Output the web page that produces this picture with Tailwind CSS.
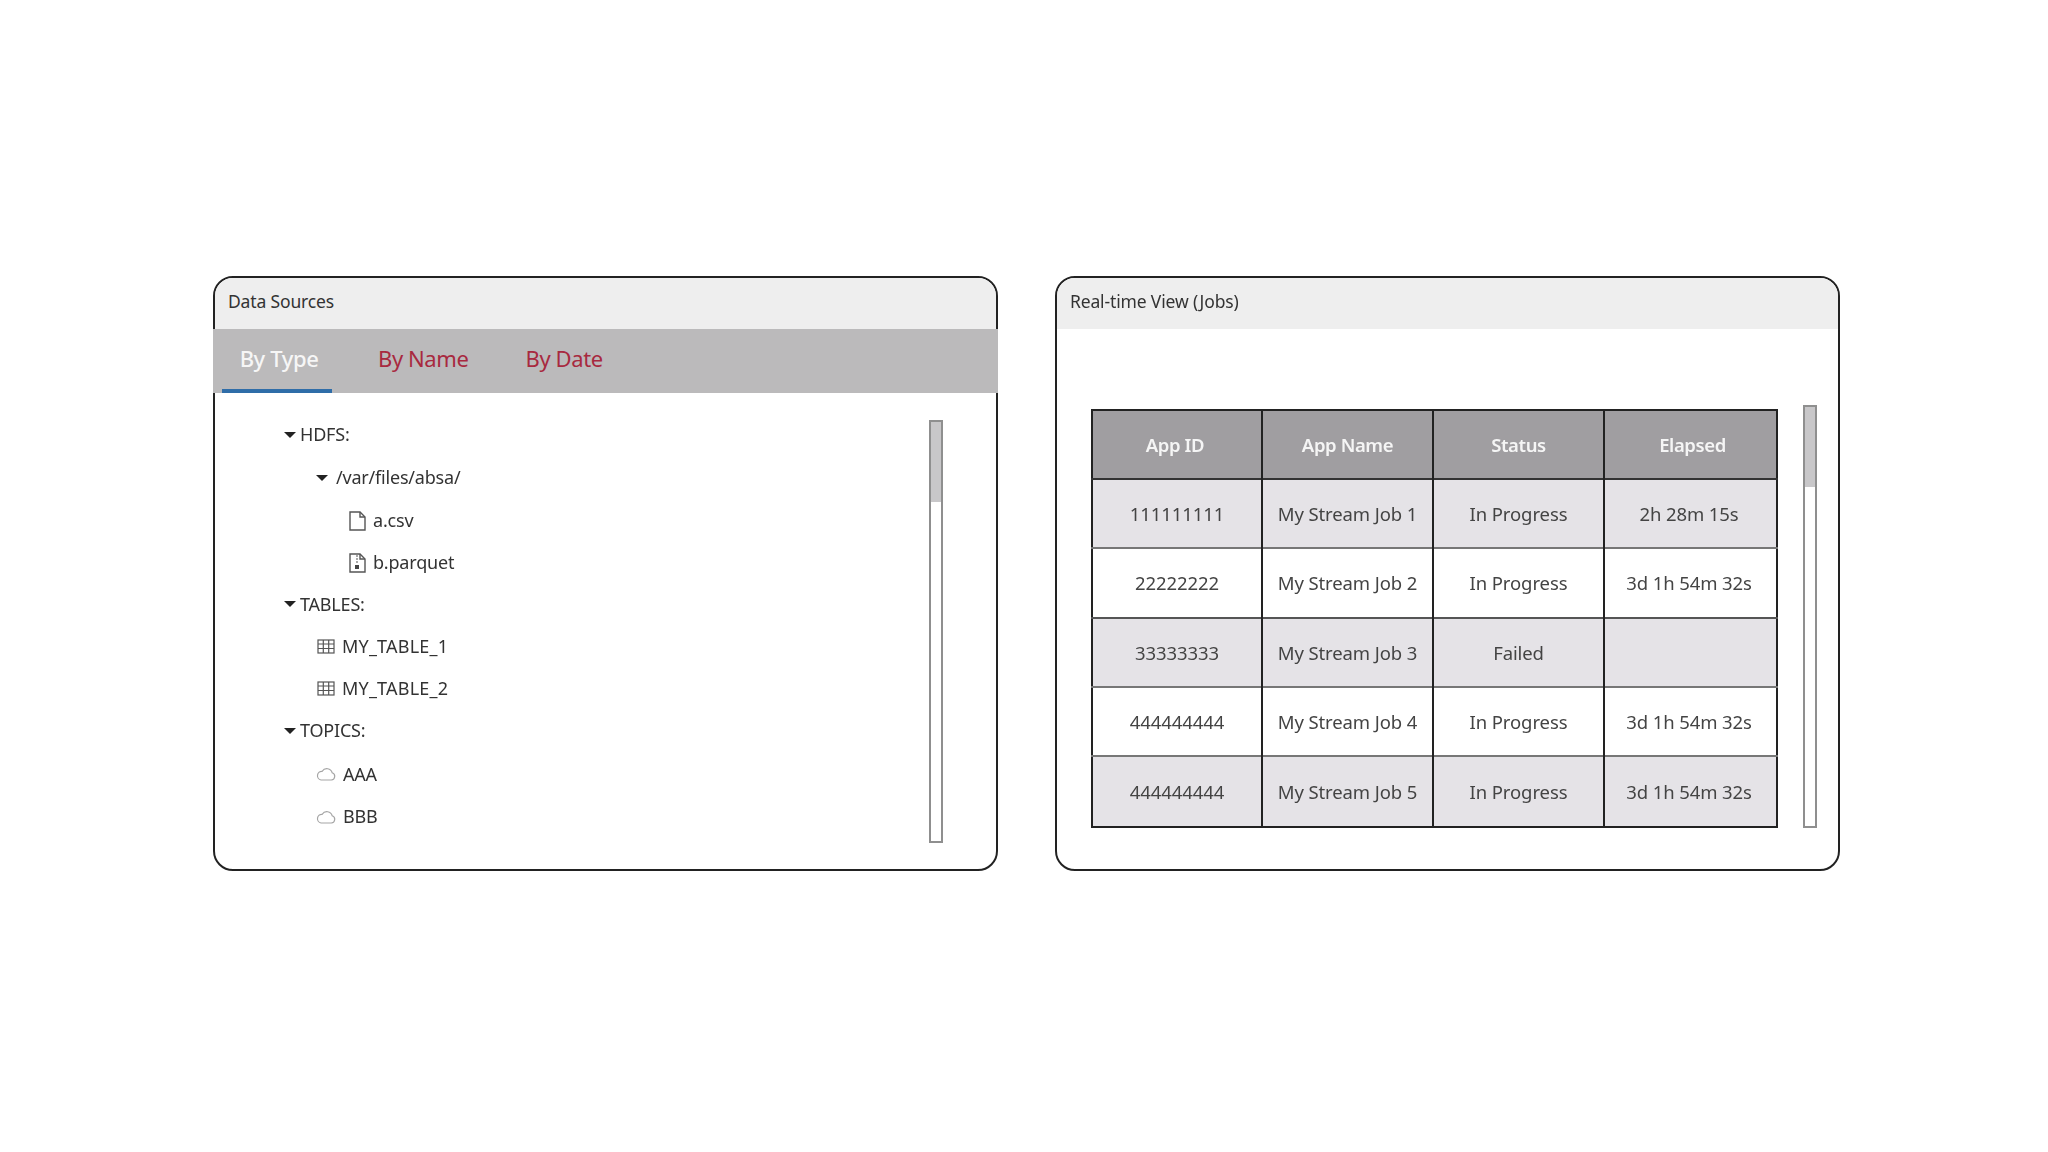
<!DOCTYPE html>
<html lang="en">
<head>
  <meta charset="UTF-8" />
  <title>Data Sources and Jobs</title>
  <script src="https://cdn.jsdelivr.net/npm/@tailwindcss/browser@4"></script>
</head>
<body class="bg-white w-[2048px] h-[1152px] overflow-hidden font-['Noto_Sans',sans-serif] text-[#333]">
  <div class="flex gap-[57px] pl-[213px] pt-[276px] blur-[0.35px]">

    <!-- data sources -->
    <section class="w-[785px] h-[595px] border-2 border-[#222] rounded-[20px]">
      <div class="h-[51px] flex items-center pl-[13px] pb-[4px] bg-[#eeeeee] rounded-t-[18px] text-[17.5px] tracking-[-0.15px]">Data Sources</div>
      <div class="h-[64px] -mx-[2px] flex bg-[#bbbabb] pl-[9px] text-[22px] tracking-[-0.4px]">
        <div class="w-[110px] text-center pl-[4px] pt-[13px] font-medium text-[#f6f6f6] border-b-[4px] border-[#2f6da8]">By Type</div>
        <div class="ml-[46px] pt-[13px] text-[#a8293f]">By Name</div>
        <div class="ml-[57px] pt-[13px] text-[#a8293f]">By Date</div>
      </div>
      <div class="flex">
        <ul class="w-[714px] pt-[20px] text-[18px] tracking-[-0.2px]">
          <li class="h-[43px] flex items-center pl-[69px] gap-[4px]">
            <svg class="w-[12px] h-[8px]" viewBox="0 0 12 8"><polygon points="0,1 12,1 6,7" fill="#222"/></svg>HDFS:
          </li>
          <li class="h-[43px] flex items-center pl-[101px] gap-[8px]">
            <svg class="w-[12px] h-[8px]" viewBox="0 0 12 8"><polygon points="0,1 12,1 6,7" fill="#222"/></svg>/var/files/absa/
          </li>
          <li class="h-[43px] flex items-center pl-[134px] gap-[7px]">
            <svg class="w-[17px] h-[20px]" viewBox="0 0 17 20" fill="none" stroke="#555" stroke-width="1.4"><path d="M1 1h10l5 5v13H1z"/><path d="M11 1v5h5"/></svg>a.csv
          </li>
          <li class="h-[41px] flex items-center pl-[134px] gap-[7px]">
            <svg class="w-[17px] h-[20px]" viewBox="0 0 17 20" fill="none" stroke="#555" stroke-width="1.4"><path d="M1 1h10l5 5v13H1z"/><path d="M11 1v5h5"/><path d="M7 3h2M7 6h2M7 9h2" stroke-width="1.2"/><rect x="6" y="12" width="4" height="4" fill="#444" stroke="none"/></svg>b.parquet
          </li>
          <li class="h-[42px] flex items-center pl-[69px] gap-[4px]">
            <svg class="w-[12px] h-[8px]" viewBox="0 0 12 8"><polygon points="0,1 12,1 6,7" fill="#222"/></svg>TABLES:
          </li>
          <li class="h-[43px] flex items-center pl-[102px] gap-[7px]">
            <svg class="w-[18px] h-[15px]" viewBox="0 0 18 15" fill="none" stroke="#555" stroke-width="1.2"><rect x="1" y="1" width="16" height="13"/><path d="M1 5h16M1 9.500h16M6.300 1v13M11.700 1v13"/></svg><span class="tracking-[0.2px]">MY_TABLE_1</span>
          </li>
          <li class="h-[41px] flex items-center pl-[102px] gap-[7px]">
            <svg class="w-[18px] h-[15px]" viewBox="0 0 18 15" fill="none" stroke="#555" stroke-width="1.2"><rect x="1" y="1" width="16" height="13"/><path d="M1 5h16M1 9.500h16M6.300 1v13M11.700 1v13"/></svg><span class="tracking-[0.2px]">MY_TABLE_2</span>
          </li>
          <li class="h-[43px] flex items-center pl-[69px] gap-[4px]">
            <svg class="w-[12px] h-[8px]" viewBox="0 0 12 8"><polygon points="0,1 12,1 6,7" fill="#222"/></svg>TOPICS:
          </li>
          <li class="h-[44px] flex items-center pl-[101px] gap-[7px]">
            <svg class="w-[20px] h-[14px]" viewBox="0 0 20 14" fill="none" stroke="#a5a5a5" stroke-width="1.2"><path d="M5 13h10.300a3.700 3.700 0 0 0 .9-7.200A5.500 5.500 0 0 0 6.200 4.300 4.400 4.400 0 0 0 5 13z"/></svg>AAA
          </li>
          <li class="h-[41px] flex items-center pl-[101px] gap-[7px]">
            <svg class="w-[20px] h-[14px]" viewBox="0 0 20 14" fill="none" stroke="#a5a5a5" stroke-width="1.2"><path d="M5 13h10.300a3.700 3.700 0 0 0 .9-7.200A5.500 5.500 0 0 0 6.200 4.300 4.400 4.400 0 0 0 5 13z"/></svg>BBB
          </li>
        </ul>
        <div class="w-[14px] h-[423px] mt-[27px] border-2 border-[#8f8f8f]">
          <div class="h-[80px] bg-[#c8c7c9]"></div>
        </div>
      </div>
    </section>

    <!-- jobs -->
    <section class="w-[785px] h-[595px] border-2 border-[#222] rounded-[20px]">
      <div class="h-[51px] flex items-center pl-[13px] pb-[4px] bg-[#eeeeee] rounded-t-[18px] text-[17.5px] tracking-[-0.15px]">Real-time View (Jobs)</div>
      <div class="flex pl-[34px]">
        <table class="w-[687px] h-[417px] mt-[80px] table-fixed border-collapse border-2 border-[#222] text-[18.5px] text-[#444] text-center tracking-[-0.1px]">
          <thead>
            <tr class="h-[69px] bg-[#a09ea1] text-[#f5f5f5] border-b-2 border-[#333]">
              <th class="w-[170px] pr-[4px] font-semibold tracking-[-0.4px] border-r-2 border-[#222]">App ID</th>
              <th class="w-[171px] font-semibold tracking-[-0.4px] border-r-2 border-[#222]">App Name</th>
              <th class="w-[171px] font-semibold tracking-[-0.4px] border-r-2 border-[#222]">Status</th>
              <th class="pl-[4px] font-semibold tracking-[-0.4px]">Elapsed</th>
            </tr>
          </thead>
          <tbody>
            <tr class="h-[69px] bg-[#e5e3e7] border-b-2 border-[#777]">
              <td class="border-r-2 border-[#222]">111111111</td><td class="border-r-2 border-[#222]">My Stream Job 1</td><td class="border-r-2 border-[#222]">In Progress</td><td class="pr-[3px]">2h 28m 15s</td>
            </tr>
            <tr class="h-[70px] bg-white border-b-2 border-[#555]">
              <td class="border-r-2 border-[#222]">22222222</td><td class="border-r-2 border-[#222]">My Stream Job 2</td><td class="border-r-2 border-[#222]">In Progress</td><td class="pr-[3px]">3d 1h 54m 32s</td>
            </tr>
            <tr class="h-[69px] bg-[#e5e3e7] border-b-2 border-[#777]">
              <td class="border-r-2 border-[#222]">33333333</td><td class="border-r-2 border-[#222]">My Stream Job 3</td><td class="border-r-2 border-[#222]">Failed</td><td></td>
            </tr>
            <tr class="h-[69px] bg-white border-b-2 border-[#777]">
              <td class="border-r-2 border-[#222]">444444444</td><td class="border-r-2 border-[#222]">My Stream Job 4</td><td class="border-r-2 border-[#222]">In Progress</td><td class="pr-[3px]">3d 1h 54m 32s</td>
            </tr>
            <tr class="h-[71px] bg-[#e5e3e7]">
              <td class="border-r-2 border-[#222]">444444444</td><td class="border-r-2 border-[#222]">My Stream Job 5</td><td class="border-r-2 border-[#222]">In Progress</td><td class="pr-[3px]">3d 1h 54m 32s</td>
            </tr>
          </tbody>
        </table>
        <div class="w-[14px] h-[423px] mt-[76px] ml-[25px] border-2 border-[#8f8f8f]">
          <div class="h-[80px] bg-[#c8c7c9]"></div>
        </div>
      </div>
    </section>
  </div>
</body>
</html>
